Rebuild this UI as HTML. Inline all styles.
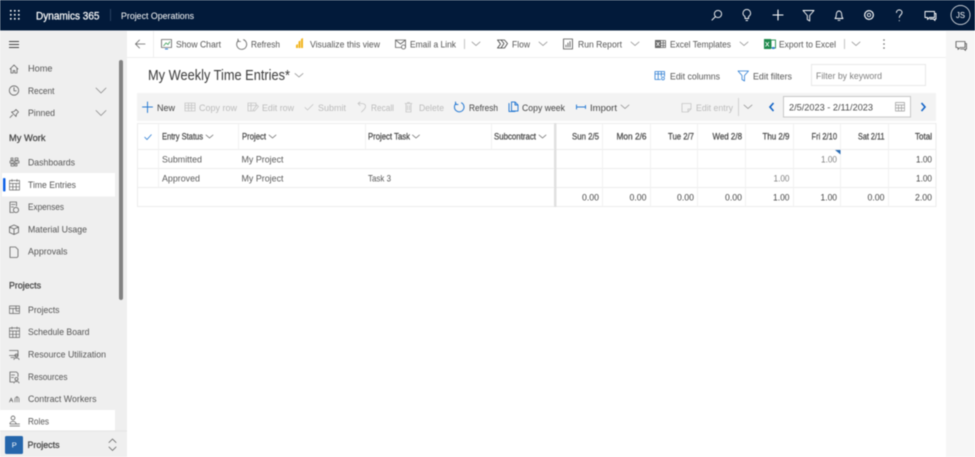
<!DOCTYPE html>
<html><head><meta charset="utf-8"><title>My Weekly Time Entries</title>
<style>
html,body{margin:0;padding:0;background:#fff;width:975px;height:457px;overflow:hidden}
svg{display:block;filter:blur(.4px)}
text{font-family:"Liberation Sans",sans-serif;font-size:9.6px;fill:#555;white-space:pre}
.w{fill:#fff}.b{font-weight:bold}.d{fill:#bbb}.h{font-size:8.8px;fill:#444;stroke:#444;stroke-width:.22}
.c{font-size:9.6px;fill:#5a5a5a}.n{fill:#444}.g{fill:#808080}
.i{fill:none;stroke:#666;stroke-width:.85;stroke-linecap:round;stroke-linejoin:round}
.t{fill:none;stroke:#ececec;stroke-width:1}
.wi{fill:none;stroke:#fff;stroke-width:.9;stroke-linecap:round;stroke-linejoin:round}
.bl{fill:none;stroke:#2b7cd3;stroke-width:1;stroke-linecap:round;stroke-linejoin:round}
.di{fill:none;stroke:#c6c6c6;stroke-width:.85;stroke-linecap:round;stroke-linejoin:round}
.ch{fill:none;stroke:#888;stroke-width:.75;stroke-linecap:round;stroke-linejoin:round}
</style></head><body>
<svg width="975" height="457" viewBox="0 0 975 457" xmlns="http://www.w3.org/2000/svg">
<rect width="975" height="457" fill="#fff"/>
<!-- top bar -->
<rect width="975" height="30.5" fill="#021a3a"/>
<g fill="#fff">
<rect x="10" y="10" width="1.6" height="1.6"/><rect x="14" y="10" width="1.6" height="1.6"/><rect x="18" y="10" width="1.6" height="1.6"/>
<rect x="10" y="14" width="1.6" height="1.6"/><rect x="14" y="14" width="1.6" height="1.6"/><rect x="18" y="14" width="1.6" height="1.6"/>
<rect x="10" y="18" width="1.6" height="1.6"/><rect x="14" y="18" width="1.6" height="1.6"/><rect x="18" y="18" width="1.6" height="1.6"/>
</g>
<text x="36" y="19.5" class="w" style="font-size:11px;stroke:#fff;stroke-width:.25" textLength="63.5" lengthAdjust="spacingAndGlyphs">Dynamics 365</text>
<rect x="110" y="9" width="1" height="12" fill="#27405f"/>
<text x="121" y="19" class="w" textLength="73" lengthAdjust="spacingAndGlyphs">Project Operations</text>
<!-- top icons -->
<circle cx="718" cy="14" r="3.6" class="wi"/><path d="M715.3 16.8L712 20" class="wi"/>
<path d="M745 16.500c-1.300-.9-2-2-2-3.300a3.800 3.800 0 0 1 7.600 0c0 1.300-.7 2.400-2 3.300v2h-3.600zM746 20.500h1.600" class="wi"/>
<path d="M778 10v10M773 15h10" class="wi" style="stroke-width:1.100"/>
<path d="M803 10.500h11l-4.300 5v5.500l-2.400-1.500v-4z" class="wi"/>
<path d="M835 18.500h8c-1-1-1.300-2-1.300-4a2.700 3.500 0 0 0-5.400 0c0 2-.3 3-1.300 4zM838 20.300h2" class="wi"/>
<circle cx="869" cy="15" r="1.700" class="wi"/><circle cx="869" cy="15" r="4.300" class="wi" stroke-dasharray="2 .9" style="stroke-width:1.200"/>
<path d="M896.500 12.500c0-3.500 5.500-3.500 5.500 0 0 2.500-2.700 2.500-2.700 5M899.300 20.500v.3" class="wi"/>
<path d="M925 11.500h9.500v6h-5l-2 2v-2H925zM934.500 13.500h1.500v5.500h-1v1.500l-1.500-1.500h-3.500" class="wi"/>
<circle cx="960.500" cy="15" r="9.500" fill="none" stroke="#fff" stroke-width=".7"/>
<text x="956" y="18" class="w" style="font-size:8px" textLength="9" lengthAdjust="spacingAndGlyphs">JS</text>
<!-- sidebar -->
<rect y="31" width="127" height="426" fill="#efefef"/>
<path d="M9 41.500h10M9 44.500h10M9 47.500h10" fill="none" stroke="#444" stroke-width=".9"/>
<rect x="119" y="60" width="4" height="240" rx="2" fill="#828282"/>
<rect x="2" y="173" width="113" height="23.500" fill="#fff"/>
<rect x="3" y="178" width="2.500" height="13.500" rx="1" fill="#0f62e6"/>
<rect x="0" y="410" width="115" height="21" fill="#fff"/>
<rect x="0" y="431" width="127" height="26" fill="#efefef"/><rect y="430.500" width="127" height=".8" fill="#e2e2e2"/>
<g>
<text x="28" y="71.500" textLength="24.500" lengthAdjust="spacingAndGlyphs">Home</text>
<text x="28" y="94" textLength="26.500" lengthAdjust="spacingAndGlyphs">Recent</text>
<text x="28" y="116" textLength="27" lengthAdjust="spacingAndGlyphs">Pinned</text>
<text x="9" y="141" style="fill:#444;stroke:#444;stroke-width:.25" textLength="36.500" lengthAdjust="spacingAndGlyphs">My Work</text>
<text x="28" y="165.500" textLength="47" lengthAdjust="spacingAndGlyphs">Dashboards</text>
<text x="28" y="188" textLength="48" lengthAdjust="spacingAndGlyphs">Time Entries</text>
<text x="28" y="210" textLength="36" lengthAdjust="spacingAndGlyphs">Expenses</text>
<text x="28" y="232.500" textLength="59" lengthAdjust="spacingAndGlyphs">Material Usage</text>
<text x="28" y="254.500" textLength="39.500" lengthAdjust="spacingAndGlyphs">Approvals</text>
<text x="9" y="288.500" style="fill:#444;stroke:#444;stroke-width:.25" textLength="32" lengthAdjust="spacingAndGlyphs">Projects</text>
<text x="28" y="313" textLength="31.500" lengthAdjust="spacingAndGlyphs">Projects</text>
<text x="28" y="335" textLength="61.500" lengthAdjust="spacingAndGlyphs">Schedule Board</text>
<text x="28" y="357.500" textLength="78" lengthAdjust="spacingAndGlyphs">Resource Utilization</text>
<text x="28" y="380" textLength="39.500" lengthAdjust="spacingAndGlyphs">Resources</text>
<text x="28" y="402" textLength="68.500" lengthAdjust="spacingAndGlyphs">Contract Workers</text>
<text x="28" y="424.500" textLength="21" lengthAdjust="spacingAndGlyphs">Roles</text>
</g>
<!-- sidebar icons -->
<path d="M10 69l4-4 4 4M11 68v5h2.200v-2.500h1.600V73H17v-5" class="i"/>
<circle cx="14" cy="90.500" r="4.700" class="i"/><path d="M14 87.500v3.300h2.300" class="i"/>
<path d="M10 117.500l2.500-2.500M11.500 112l4.500 4.500 .5-2.500 2-2-2.500-2.500-2 2z" class="i"/>
<path d="M96 88l5 5 5-5M96 110.500l5 5 5-5" class="ch"/>
<path d="M11 158h2v2h-2zM15 158h3v2h-3zM10 161h4v2h-4zM15 161h4v2h-4zM11 164h3v2h-3zM15 164h2v2h-2z" class="i" style="stroke-width:.7"/>
<path d="M9.500 180.500h10v9.500h-10zM9.500 183.500h10M12.800 183.500V190M16.200 183.500V190M9.500 186.800h10M12 179.500v2M17 179.500v2" class="i" style="stroke-width:.7"/>
<path d="M10 202h6.500v4M10 202v10.500h3.500M11.500 204.500h3.500M11.500 207h2" class="i"/><circle cx="16" cy="210" r="2.600" class="i"/>
<path d="M14 225l4.500 2v5.500L14 234.500l-4.500-2V227zM9.500 227l4.500 2 4.500-2M14 229v5.500" class="i"/>
<path d="M10 247h5.500l2.500 2.500v7l-1 1h-7z" class="i"/>
<path d="M9.500 306h10v7.500h-10zM9.500 308.500h10M13 308.500v5M16 306v5h3.500" class="i" style="stroke-width:.7"/>
<path d="M9.500 328h10v9.500h-10zM9.500 331h10M12.800 331V337.500M16.200 331V337.500M9.500 334.300h10M12 327v2M17 327v2" class="i" style="stroke-width:.7"/>
<path d="M9.500 350.500h8.500v5h-8.500M11 357.500h3" class="i"/><circle cx="16.500" cy="355.500" r="1.500" class="i"/><path d="M14 359.500c0-2 5-2 5 0" class="i"/>
<path d="M10 372h6.500l1.500 1.500v3M10 372v10h3.500M11.500 375h3M11.500 377.500h2" class="i"/><circle cx="16.500" cy="379" r="1.500" class="i"/><path d="M14 383c0-2 5-2 5 0" class="i"/>
<path d="M9.500 402l1.700-4 1.700 4M10 400.500h2.500M15 402v-3a2 2 0 0 1 4 0v3M17 396.500v5.500" class="i" style="stroke-width:.7"/>
<circle cx="13" cy="418" r="1.900" class="i"/><path d="M10 424c0-3.500 6-3.500 6 0M10 426h9.500M10 424h9.500" class="i"/>
<rect x="5" y="436" width="18" height="18" rx="1.500" fill="#2566ab"/>
<text x="11.800" y="447.500" class="w" style="font-size:7.500px">P</text>
<text x="27.500" y="448" style="fill:#444;stroke:#444;stroke-width:.25" textLength="32" lengthAdjust="spacingAndGlyphs">Projects</text>
<path d="M109 442.500l3.500-3.500 3.500 3.500M109 447l3.500 3.500 3.500-3.500" class="i"/>
<!-- right panel -->
<rect x="946" y="31" width="29" height="426" fill="#f6f6f6"/>
<path d="M956 41.500h9v6h-5l-2 2v-2h-2zM965 43.500h1.500v5.500h-1v1.500l-1.500-1.500h-3.500" class="i" style="stroke:#555"/>
<!-- command bar -->
<rect x="127" y="57" width="819" height="1" fill="#eeeeee"/>
<rect x="153" y="31" width="1" height="26" fill="#eeeeee"/>
<path d="M145 44h-9.500M139.500 40l-4 4 4 4" class="i"/>
<rect x="161.500" y="39.500" width="10" height="8" class="i"/><path d="M163.500 46l2.500-3 2 1.500 2-3" fill="none" stroke="#4aa564" stroke-width=".9"/><path d="M165 49h3" stroke="#2b7cd3" fill="none"/>
<path d="M238.500 40.500a5 5 0 1 0 5-.8M238 39v2.500h2.500" class="i"/>
<path d="M296 48v-3l2-1v4zM298.500 48v-6.500l2-1V48zM301 48v-9l2-1v10z" fill="#f2b51f"/>
<rect x="395.500" y="40" width="10" height="7.500" class="i"/><path d="M395.500 40l5 4 5-4" class="i"/><circle cx="403.500" cy="47" r="2" class="i" style="fill:#fff"/>
<path d="M497.500 40h7l3 3.500-3 4.500h-7l3-4zM501 40l3 3.500-3 4.500" class="i" style="stroke:#444"/>
<rect x="563.500" y="39" width="9" height="10" class="i" style="stroke:#555"/><path d="M566 47v-2M568 47v-4M570 47v-5.500" class="i" style="stroke:#555"/>
<rect x="655" y="40" width="6" height="8" fill="#666"/><path d="M661 40.500h4.500v7H661M661 43h4.500M661 45.500h4.500M663.200 40.500v7" class="i"/><path d="M656.500 42l3 4M659.500 42l-3 4" stroke="#fff" stroke-width=".7"/>
<rect x="764" y="39" width="7" height="10" fill="#1e8a4c"/><rect x="771" y="40" width="4.500" height="8" fill="none" stroke="#1e8a4c" stroke-width=".9"/><path d="M765.500 42l3.500 4.500M769 42l-3.500 4.500" stroke="#fff" stroke-width=".8"/><rect x="772" y="47" width="2.500" height="2" fill="#2b7cd3"/>
<g>
<text x="176" y="47.300" textLength="45" lengthAdjust="spacingAndGlyphs">Show Chart</text>
<text x="251" y="47.300" textLength="29" lengthAdjust="spacingAndGlyphs">Refresh</text>
<text x="310" y="47.300" textLength="70" lengthAdjust="spacingAndGlyphs">Visualize this view</text>
<text x="410" y="47.300" textLength="46" lengthAdjust="spacingAndGlyphs">Email a Link</text>
<text x="512" y="47.300" textLength="18" lengthAdjust="spacingAndGlyphs">Flow</text>
<text x="578" y="47.300" textLength="44" lengthAdjust="spacingAndGlyphs">Run Report</text>
<text x="670" y="47.300" textLength="61" lengthAdjust="spacingAndGlyphs">Excel Templates</text>
<text x="779" y="47.300" textLength="57" lengthAdjust="spacingAndGlyphs">Export to Excel</text>
</g>
<rect x="464" y="39" width="1" height="10" fill="#c4c4c4"/><rect x="844" y="39" width="1" height="10" fill="#c4c4c4"/>
<path d="M472 42l4 3.500 4-3.500M539 42l4 3.500 4-3.500M631 42l4 3.500 4-3.500M740 42l4 3.500 4-3.500M852 42l4 3.500 4-3.500" class="ch"/>
<g fill="#666"><circle cx="884" cy="40" r=".8"/><circle cx="884" cy="44" r=".8"/><circle cx="884" cy="48" r=".8"/></g>
<!-- title row -->
<text x="148" y="80" style="font-size:15px;fill:#3a3a3a" textLength="142" lengthAdjust="spacingAndGlyphs">My Weekly Time Entries*</text>
<path d="M295 73.500l4 3.500 4-3.500" class="ch"/>
<path d="M655 71.500h9.500v5M655 71.500v8h5.500M655 74h9.500M658.200 71.500v8M661.300 71.500v5" class="bl" style="stroke-width:.8"/><circle cx="663" cy="78.500" r="1.400" class="bl" style="stroke-width:.7"/>
<text x="670" y="79.500" textLength="50" lengthAdjust="spacingAndGlyphs">Edit columns</text>
<path d="M738 71h10.500l-4 4.500V81l-2.500-1.500v-4z" class="bl" style="stroke-width:.8"/>
<text x="753" y="79.500" textLength="39" lengthAdjust="spacingAndGlyphs">Edit filters</text>
<rect x="811.500" y="64.500" width="114" height="21" fill="#fff" stroke="#e8e8e8"/>
<text x="816" y="79" style="fill:#808080" textLength="66" lengthAdjust="spacingAndGlyphs">Filter by keyword</text>
<!-- toolbar -->
<rect x="137" y="93" width="799" height="28" fill="#f3f3f3"/>
<path d="M147.500 102v10.500M142.500 107h10" class="bl"/>
<text x="157" y="111" class="n" textLength="18" lengthAdjust="spacingAndGlyphs">New</text>
<path d="M185 103h10v8h-10zM185 105.500h10M188.500 103v8M191.500 103v8M185 108h10" class="di"/>
<text x="199" y="111" class="d" textLength="38" lengthAdjust="spacingAndGlyphs">Copy row</text>
<path d="M248 103h8v3M248 103v8h5M248 105.500h7M251 103v8M253 110l4-5 1.500 1.500-4 4.500z" class="di"/>
<text x="262" y="111" class="d" textLength="32" lengthAdjust="spacingAndGlyphs">Edit row</text>
<path d="M305 107.500l2.500 2.500 5.500-5.500" class="di"/>
<text x="318" y="111" class="d" textLength="28" lengthAdjust="spacingAndGlyphs">Submit</text>
<path d="M358 103.500h3.500c3.500 0 4.500 2 4 3.500-.5 2-2.500 3.500-4 5M358 103.500l2-1.500M358 103.500l2 2" class="di"/>
<text x="371" y="111" class="d" textLength="23" lengthAdjust="spacingAndGlyphs">Recall</text>
<path d="M405 103.500h7M406 103.500v8.500h5v-8.500M407.500 105.500v4.500M409.500 105.500v4.500M407.500 103.500v-1h2v1" class="di"/>
<text x="419" y="111" class="d" textLength="25" lengthAdjust="spacingAndGlyphs">Delete</text>
<path d="M456 103.500a4.800 4.800 0 1 0 5.500-.7M455.500 102v2.500h2.500" class="bl"/>
<text x="469" y="111" class="n" textLength="29" lengthAdjust="spacingAndGlyphs">Refresh</text>
<path d="M509 103.500v8h6M511.500 102h3.500l3 3v6h-6.500zM515 102v3h3" class="bl"/>
<text x="522" y="111" class="n" textLength="43" lengthAdjust="spacingAndGlyphs">Copy week</text>
<path d="M576.500 107h9M576.500 105v4M585.500 105.500v3" class="bl"/>
<text x="590" y="111" class="n" textLength="27" lengthAdjust="spacingAndGlyphs">Import</text>
<path d="M621 105l4 3.500 4-3.500" class="ch"/>
<path d="M682 103.500h9v5.500l-3 3h-6zM688 112v-3h3" class="di"/>
<text x="696" y="111" class="d" textLength="37" lengthAdjust="spacingAndGlyphs">Edit entry</text>
<rect x="738" y="98" width="1" height="18" fill="#d0d0d0"/>
<path d="M744 105l4 3.500 4-3.500" class="ch"/>
<path d="M773.500 103l-3.500 4 3.500 4" fill="none" stroke="#0f62c6" stroke-width="1.600"/>
<rect x="783.500" y="96.500" width="127" height="20.500" fill="#fff" stroke="#c8c8c8"/>
<text x="789" y="110.500" style="fill:#4a4a4a" textLength="84" lengthAdjust="spacingAndGlyphs">2/5/2023 - 2/11/2023</text>
<path d="M895.500 102.500h9v8.500h-9zM895.500 105h9M898.500 105v6M901.500 105v6M895.500 108h9" class="i" style="stroke:#999;stroke-width:.7"/>
<path d="M921.500 103l3.500 4-3.500 4" fill="none" stroke="#0f62c6" stroke-width="1.600"/>
<!-- table -->
<g>
<path d="M137.500 123.500h798.500v83H137.500zM137.500 149.500H936M137.500 168.500H936M137.500 187.500H936" class="t"/>
<path d="M158.500 123.500v64M238.500 123.500v26M365.500 123.500v26M491.500 123.500v26" class="t" style="stroke:#f2f2f2"/>
<path d="M602.500 123.500v83M650.500 123.500v83M697.500 123.500v83M745.500 123.500v83M793.500 123.500v83M840.500 123.500v83M888.500 123.500v83" class="t" style="stroke:#f2f2f2"/>
<rect x="554" y="123" width="2.500" height="84" fill="#e0e0e0"/>
</g>
<path d="M144.500 137l2.500 2.500 4.500-5" fill="none" stroke="#2b7cd3" stroke-width=".8"/>
<text x="162" y="139.500" class="h" textLength="41" lengthAdjust="spacingAndGlyphs">Entry Status</text>
<path d="M206 135l3.500 3 3.500-3" class="ch" style="stroke:#666"/>
<text x="242" y="139.500" class="h" textLength="24" lengthAdjust="spacingAndGlyphs">Project</text>
<path d="M269 135l3.500 3 3.500-3" class="ch" style="stroke:#666"/>
<text x="368" y="139.500" class="h" textLength="42" lengthAdjust="spacingAndGlyphs">Project Task</text>
<path d="M412.500 135l3.500 3 3.500-3" class="ch" style="stroke:#666"/>
<text x="494" y="139.500" class="h" textLength="42" lengthAdjust="spacingAndGlyphs">Subcontract</text>
<path d="M539 135l3.500 3 3.500-3" class="ch" style="stroke:#666"/>
<text x="572" y="139.500" class="h" textLength="27" lengthAdjust="spacingAndGlyphs">Sun 2/5</text>
<text x="616.500" y="139.500" class="h" textLength="30" lengthAdjust="spacingAndGlyphs">Mon 2/6</text>
<text x="668" y="139.500" class="h" textLength="26" lengthAdjust="spacingAndGlyphs">Tue 2/7</text>
<text x="712.500" y="139.500" class="h" textLength="29.500" lengthAdjust="spacingAndGlyphs">Wed 2/8</text>
<text x="762.500" y="139.500" class="h" textLength="27" lengthAdjust="spacingAndGlyphs">Thu 2/9</text>
<text x="811.500" y="139.500" class="h" textLength="25.500" lengthAdjust="spacingAndGlyphs">Fri 2/10</text>
<text x="858" y="139.500" class="h" textLength="26.500" lengthAdjust="spacingAndGlyphs">Sat 2/11</text>
<text x="915" y="139.500" class="h" textLength="17" lengthAdjust="spacingAndGlyphs">Total</text>
<text x="162" y="162.500" class="c" textLength="40" lengthAdjust="spacingAndGlyphs">Submitted</text>
<text x="241.500" y="162.500" class="c" textLength="42" lengthAdjust="spacingAndGlyphs">My Project</text>
<text x="162" y="181.500" class="c" textLength="38" lengthAdjust="spacingAndGlyphs">Approved</text>
<text x="241.500" y="181.500" class="c" textLength="42" lengthAdjust="spacingAndGlyphs">My Project</text>
<text x="368" y="181.500" class="c" textLength="23" lengthAdjust="spacingAndGlyphs">Task 3</text>
<path d="M835 150h5.500v4.500z" fill="#2a6cb5"/>
<text x="821" y="162.500" class="g" textLength="16" lengthAdjust="spacingAndGlyphs">1.00</text>
<text x="916" y="162.500" class="n" textLength="16" lengthAdjust="spacingAndGlyphs">1.00</text>
<text x="773.500" y="181.500" class="g" textLength="16" lengthAdjust="spacingAndGlyphs">1.00</text>
<text x="916" y="181.500" class="n" textLength="16" lengthAdjust="spacingAndGlyphs">1.00</text>
<text x="582" y="200.500" class="n" textLength="17" lengthAdjust="spacingAndGlyphs">0.00</text>
<text x="629.500" y="200.500" class="n" textLength="17" lengthAdjust="spacingAndGlyphs">0.00</text>
<text x="677" y="200.500" class="n" textLength="17" lengthAdjust="spacingAndGlyphs">0.00</text>
<text x="725" y="200.500" class="n" textLength="17" lengthAdjust="spacingAndGlyphs">0.00</text>
<text x="773" y="200.500" class="n" textLength="16.500" lengthAdjust="spacingAndGlyphs">1.00</text>
<text x="820.500" y="200.500" class="n" textLength="16.500" lengthAdjust="spacingAndGlyphs">1.00</text>
<text x="867.500" y="200.500" class="n" textLength="17" lengthAdjust="spacingAndGlyphs">0.00</text>
<text x="915" y="200.500" class="n" textLength="17" lengthAdjust="spacingAndGlyphs">2.00</text>
</svg>
</body></html>
